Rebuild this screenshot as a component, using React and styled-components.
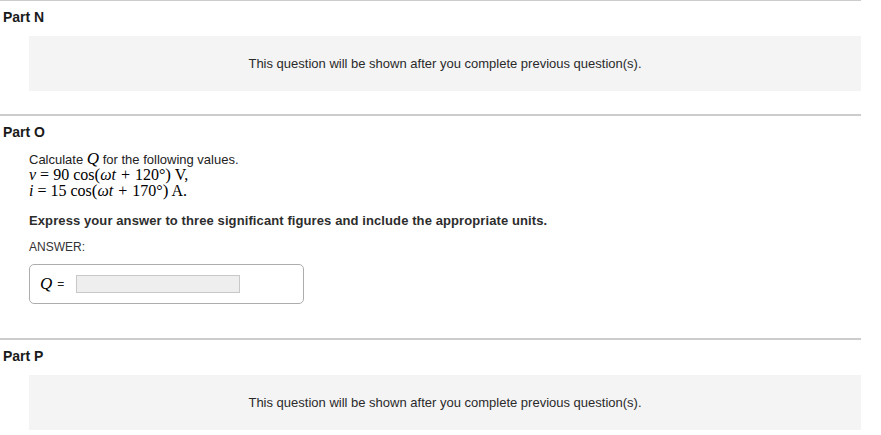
import React from "react";
import styled, { createGlobalStyle } from "styled-components";

const Global = createGlobalStyle`
  html, body { margin: 0; padding: 0; background: #fff; }
  body { font-family: "Liberation Sans", Arial, sans-serif; color: #222; font-size: 13px; }
`;

const Page = styled.div`
  width: 861px;
  margin-top: -1px;
`;

const Section = styled.section`
  border-top: 2px solid #cccccc;
  padding-top: 8px;
  padding-bottom: ${(p) => p.$pb ?? 23}px;
`;

const PartTitle = styled.h3`
  margin: 0;
  padding-left: 3px;
  font-size: 14px;
  line-height: 16px;
  font-weight: bold;
  color: #1a1a1a;
`;

const Locked = styled.div`
  margin: 11px 0 0 29px;
  height: 55px;
  background: #f4f4f4;
  display: flex;
  align-items: center;
  justify-content: center;
  font-size: 13px;
  color: #2a2a2a;
`;

const Body = styled.div`
  padding: 12px 0 0 29px;
`;

const Text = styled.div`
  font-size: 13px;
  line-height: 15px;
  color: #222;
`;

const MathLine = styled.div`
  font-family: "Liberation Serif", "Times New Roman", serif;
  font-size: 16px;
  line-height: 16px;
  color: #000;
`;

const MVar = styled.i`
  font-style: italic;
`;

const Op = styled.span`
  margin: 0 ${(p) => p.$space || 4}px;
`;

const Paren = styled.span`
  font-size: 17px;
  line-height: 0;
`;

const QVar = styled.i`
  font-family: "Liberation Serif", "Times New Roman", serif;
  font-style: italic;
  font-size: 17px;
  line-height: 0;
  color: #000;
`;

const Instr = styled.div`
  margin-top: 14px;
  font-size: 13px;
  line-height: 15px;
  font-weight: bold;
  letter-spacing: 0.1px;
  color: #2d2d2d;
`;

const AnswerLabel = styled.div`
  margin-top: 12px;
  font-size: 12px;
  line-height: 14px;
  color: #333;
`;

const AnswerBox = styled.div`
  margin-top: 10px;
  width: 275px;
  height: 40px;
  box-sizing: border-box;
  border: 1px solid #adadad;
  border-radius: 5px;
  display: flex;
  align-items: center;
  padding-left: 10px;
`;

const Eq = styled.span`
  font-size: 12px;
  margin: 0 12px 0 5px;
  color: #222;
`;

const Input = styled.div`
  width: 164px;
  height: 18px;
  box-sizing: border-box;
  border: 1px solid #c8c8c8;
  background: #eeeeee;
`;

const LOCKED = "This question will be shown after you complete previous question(s).";

export default function App() {
  return (
    <>
      <Global />
      <Page>
        <Section>
          <PartTitle>Part N</PartTitle>
          <Locked>{LOCKED}</Locked>
        </Section>
        <Section $pb={34}>
          <PartTitle>Part O</PartTitle>
          <Body>
            <Text>
              Calculate <QVar>Q</QVar> for the following values.
            </Text>
            <MathLine>
              <MVar>v</MVar>
              <Op>=</Op>90 cos<Paren>(</Paren>
              <MVar>ωt</MVar>
              <Op $space={5}>+</Op>120°<Paren>)</Paren> V,
            </MathLine>
            <MathLine>
              <MVar>i</MVar>
              <Op>=</Op>15 cos<Paren>(</Paren>
              <MVar>ωt</MVar>
              <Op $space={5}>+</Op>170°<Paren>)</Paren> A.
            </MathLine>
            <Instr>Express your answer to three significant figures and include the appropriate units.</Instr>
            <AnswerLabel>ANSWER:</AnswerLabel>
            <AnswerBox>
              <QVar>Q</QVar>
              <Eq>=</Eq>
              <Input />
            </AnswerBox>
          </Body>
        </Section>
        <Section $pb={5}>
          <PartTitle>Part P</PartTitle>
          <Locked>{LOCKED}</Locked>
        </Section>
      </Page>
    </>
  );
}
